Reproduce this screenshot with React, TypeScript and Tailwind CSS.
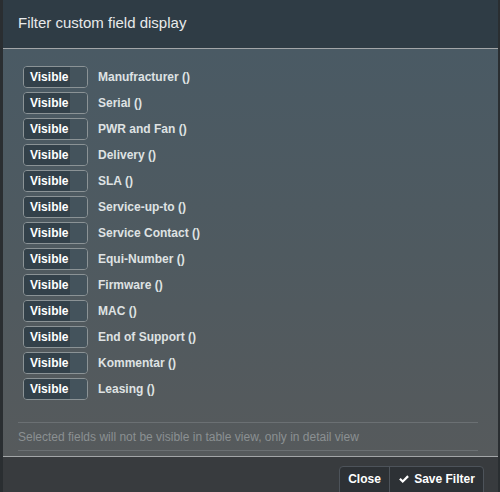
import React from 'react';

const fields = [
  'Manufracturer ()',
  'Serial ()',
  'PWR and Fan ()',
  'Delivery ()',
  'SLA ()',
  'Service-up-to ()',
  'Service Contact ()',
  'Equi-Number ()',
  'Firmware ()',
  'MAC ()',
  'End of Support ()',
  'Kommentar ()',
  'Leasing ()',
];

const CheckIcon = () => (
  <svg viewBox="0 0 16 16" className="w-[12px] h-[12px]" fill="currentColor" aria-hidden="true">
    <path d="M1.5 8.6 L3.6 6.5 L6.3 9.2 L12.4 3.1 L14.5 5.2 L6.3 13.4 Z" />
  </svg>
);

export default function App() {
  return (
    <div className="w-[500px] h-[492px] overflow-hidden bg-[#2b3034] flex" style={{ fontFamily: '"Liberation Sans", Arial, sans-serif' }}>
      <div className="w-[3px] shrink-0 bg-[#2a2e31]" />
      <div className="w-[495px] h-full flex flex-col">
        {/* Header */}
        <div className="h-[49px] shrink-0 bg-[#2f3c45] border-b border-[#a3a6a8] flex items-center px-[15px] pb-[2px]">
          <h2 className="text-[15px] text-[#e8eaeb] font-normal">Filter custom field display</h2>
        </div>

        {/* Body */}
        <div className="h-[407px] shrink-0 bg-gradient-to-b from-[#4a5a64] via-[#4f5a60] to-[#565a5c] px-[15px] pt-[17px] flex flex-col">
          <div className="flex flex-col gap-[4px]">
            {fields.map((f) => (
              <div key={f} className="flex items-center h-[22px]">
                <div className="ml-[5px] w-[65px] h-[22px] rounded-[4px] border border-[#8b9396] flex overflow-hidden">
                  <div className="w-[46px] bg-[#33414a] text-white text-[12px] font-bold flex items-center pl-[6px]">Visible</div>
                  <div className="flex-1 bg-[#44535c]" />
                </div>
                <span className="ml-[10px] text-[12px] font-bold text-[#dfe2e3]">{f}</span>
              </div>
            ))}
          </div>
          <div className="mt-[22px] w-[460px] border-t border-[#6b7073]" />
          <p className="h-[27px] flex items-center text-[12px] text-[#8b9092]">
            Selected fields will not be visible in table view, only in detail view
          </p>
          <div className="w-[460px] border-t border-[#6b7073]" />
        </div>

        {/* Footer */}
        <div className="flex-1 bg-[#383b3e] border-t border-[#a3a6a8] flex justify-end items-start pt-[9px] pr-[14px]">
          <div className="flex h-[30px] border border-[#4d535a] rounded-[4px] bg-[#2d3135] overflow-hidden">
            <button className="w-[50px] text-[12px] font-bold text-white border-r border-[#4d535a] pb-[4px]">Close</button>
            <button className="w-[93px] text-[12px] font-bold text-white flex items-center justify-center gap-[4px] pb-[4px]">
              <CheckIcon />
              Save Filter
            </button>
          </div>
        </div>
      </div>
      <div className="w-[2px] shrink-0 bg-[#2a2e31]" />
    </div>
  );
}
